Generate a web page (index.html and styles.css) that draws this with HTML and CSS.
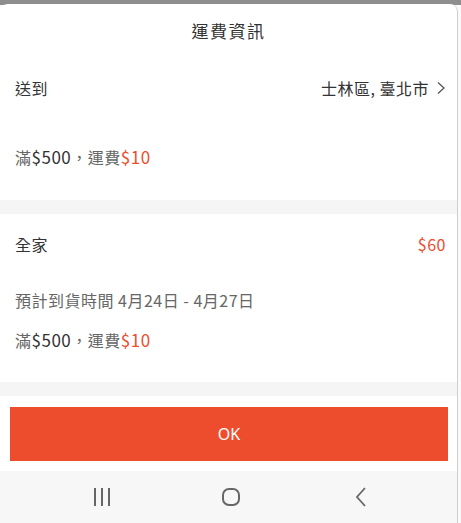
FILE: index.html
```html
<!DOCTYPE html>
<html lang="zh-Hant">

<head>
    <meta charset="UTF-8">
    <meta name="viewport" content="width=device-width, initial-scale=1.0">
    <title>運費資訊</title>
    <link rel="stylesheet" href="styles.css">
</head>

<body>
    <div class="backdrop"></div>
    <div class="sheet">
        <header class="title">運費資訊</header>

        <section class="block">
            <div class="row row-to">
                <span>送到</span>
                <span class="address">士林區, 臺北市
                    <svg class="chevron" width="10" height="14" viewBox="0 0 10 14">
                        <path d="M2 1.5 L8 7 L2 12.5" fill="none" stroke="#555" stroke-width="1.3" />
                    </svg>
                </span>
            </div>
            <p class="rule rule-first">滿<b>$500</b>，運費<em>$10</em></p>
        </section>

        <div class="band"></div>

        <section class="block">
            <div class="row row-shop">
                <span>全家</span>
                <span class="price">$60</span>
            </div>
            <p class="eta">預計到貨時間 4月24日 - 4月27日</p>
            <p class="rule">滿<b>$500</b>，運費<em>$10</em></p>
        </section>

        <div class="band"></div>

        <div class="actions">
            <button class="ok">OK</button>
        </div>

        <nav class="navbar">
            <svg width="20" height="20" viewBox="0 0 20 20">
                <path d="M3 1 V19 M10 1 V19 M17 1 V19" stroke="#666" stroke-width="2" />
            </svg>
            <svg width="20" height="20" viewBox="0 0 20 20">
                <rect x="2" y="2" width="16" height="16" rx="6" fill="none" stroke="#666" stroke-width="2" />
            </svg>
            <svg width="20" height="20" viewBox="0 0 20 20">
                <path d="M15 1 L7 10 L15 19" fill="none" stroke="#666" stroke-width="1.8" />
            </svg>
        </nav>
    </div>
</body>

</html>
```

FILE: styles.css
```css
body {
    font-family: "Noto Sans CJK TC", "Noto Sans", sans-serif;
    margin: 0;
    padding: 0;
    background-color: #fafafa;
    color: #333;
    font-size: 16px;
    letter-spacing: 0.5px;
}

.backdrop {
    height: 5px;
    background-color: #8e8e8e;
}

.sheet {
    background-color: #fff;
    border-radius: 8px 8px 0 0;
    margin-top: -1px;
    margin-right: 3px;
    border-right: 1px solid #cfcfcf;
}

.title {
    height: 54px;
    line-height: 54px;
    text-align: center;
    font-size: 17px;
    letter-spacing: 1.5px;
    color: #333;
}

.block {
    padding: 0 11px 0 15px;
}

.row {
    display: flex;
    justify-content: space-between;
    align-items: center;
}

.row-to {
    height: 60px;
}

.address {
    display: flex;
    align-items: center;
    gap: 7px;
}

p {
    margin: 0;
    line-height: 20px;
}

.rule {
    color: #666;
    padding-bottom: 32px;
}

.rule-first {
    padding-top: 29px;
    padding-bottom: 33px;
}

.rule b {
    font-weight: normal;
    color: #333;
    font-size: 17px;
}

.rule em {
    font-style: normal;
    color: #ee4d2d;
    font-size: 17px;
}

.band {
    height: 14px;
    background-color: #f5f5f5;
}

.row-shop {
    height: 60px;
}

.price {
    color: #ee4d2d;
}

.eta {
    color: #666;
    padding-top: 16px;
    padding-bottom: 20px;
}

.actions {
    padding: 11px 9px 10px 10px;
}

.ok {
    display: block;
    width: 100%;
    height: 54px;
    background-color: #ee4d2d;
    color: #fff;
    border: none;
    font-family: "Noto Sans", sans-serif;
    font-size: 16px;
}

.navbar {
    height: 52px;
    background-color: #f7f7f7;
    display: flex;
    align-items: center;
    gap: 109px;
    padding-left: 92px;
}
```
